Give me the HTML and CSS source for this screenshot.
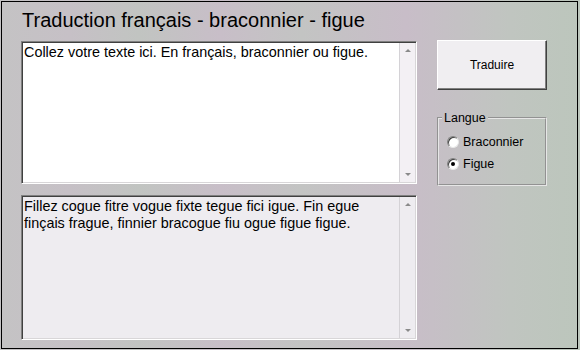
FILE: index.html
```html
<!DOCTYPE html>
<html lang="fr">
<head>
  <meta charset="UTF-8">
  <title>Traduction français - braconnier - figue</title>
  <link rel="stylesheet" href="styles.css">
</head>
<body>
  <div class="window">
    <h1 class="title">Traduction français - braconnier - figue</h1>

    <div class="main">
      <div class="texts">
        <div class="box box-input">
          <div class="box-text">Collez votre texte ici. En français, braconnier ou figue.</div>
          <div class="scroll">
            <span class="arrow arrow-up"></span>
            <span class="arrow arrow-down"></span>
          </div>
        </div>
        <div class="box box-output">
          <div class="box-text">Fillez cogue fitre vogue fixte tegue fici igue. Fin egue finçais frague, finnier bracogue fiu ogue figue figue.</div>
          <div class="scroll">
            <span class="arrow arrow-up"></span>
            <span class="arrow arrow-down"></span>
          </div>
        </div>
      </div>

      <div class="side">
        <button class="button" type="button">Traduire</button>
        <fieldset class="langue">
          <legend>Langue</legend>
          <div class="options">
            <label class="option"><span class="radio"></span>Braconnier</label>
            <label class="option"><span class="radio checked"></span>Figue</label>
          </div>
        </fieldset>
      </div>
    </div>
  </div>
</body>
</html>
```

FILE: styles.css
```css
body {
  margin: 0;
  font-family: "Liberation Sans", Arial, sans-serif;
  color: #000;
  background: linear-gradient(90deg, #c4c3c4 0%, #c6c0c6 12%, #c1c4c1 24%, #c8bec8 38%, #c3c4c3 52%, #c8bdc8 70%, #c0c5c0 88%, #bcc6bc 100%);
  height: 350px;
  overflow: hidden;
}
.window {
  margin: 1px 0 0 1px;
  width: 556px;
  height: 346px;
  border: 1px solid #000;
  padding: 0 0 0 19px;
}
.title {
  margin: 0;
  padding: 7px 0 0 1px;
  font-size: 20px;
  line-height: 22px;
  font-weight: normal;
}
.main {
  display: grid;
  grid-template-columns: 396px 110px;
  column-gap: 20px;
  margin-top: 10px;
}
.texts {
  display: flex;
  flex-direction: column;
  gap: 11px;
}
.box {
  display: flex;
  box-sizing: border-box;
  border: 1px solid;
  border-color: #808080 #fff #fff #808080;
  box-shadow: inset 1px 1px 0 #404040, inset -1px -1px 0 #d8d6d8;
  padding: 1px;
  font-size: 14.4px;
  line-height: 17px;
}
.box-input {
  height: 143px;
  background-color: #fff;
}
.box-output {
  height: 145px;
  background-color: #eeecf0;
}
.box-text {
  flex: 1;
  padding: 1px 1px 0 1px;
}
.scroll {
  width: 15px;
  border-left: 1px solid #d4d2d6;
  display: flex;
  flex-direction: column;
  justify-content: space-between;
  align-items: center;
  padding: 6px 0;
}
.box-input .scroll {
  background-color: #f3f0f4;
}
.arrow {
  width: 0;
  height: 0;
  border-left: 3px solid transparent;
  border-right: 3px solid transparent;
}
.arrow-up {
  border-bottom: 3px solid #8a8a8a;
}
.arrow-down {
  border-top: 3px solid #8a8a8a;
}
.side {
  display: flex;
  flex-direction: column;
}
.button {
  margin-top: -1px;
  height: 50px;
  padding: 0;
  font-family: "Liberation Sans", Arial, sans-serif;
  font-size: 12px;
  color: #000;
  background-color: #f0eef1;
  border: 1px solid;
  border-color: #fff #404040 #404040 #fff;
  box-shadow: inset -1px -1px 0 #808080;
}
.langue {
  margin: 21px 0 0 0;
  padding: 6px 0 9px 3px;
  border: 2px groove #e6e6e6;
  min-width: 0;
}
.langue legend {
  padding: 0 2px;
  font-size: 12.5px;
  line-height: 14px;
}
.options {
  padding-left: 5px;
}
.option {
  display: flex;
  align-items: center;
  gap: 4px;
  height: 22px;
  font-size: 12.5px;
}
.radio {
  position: relative;
  width: 12px;
  height: 12px;
  box-sizing: border-box;
  border-radius: 50%;
  background-color: #fff;
  border: 1px solid;
  border-color: #808080 #e8e8e8 #e8e8e8 #808080;
  box-shadow: inset 1px 1px 0 #404040;
}
.radio.checked::after {
  content: "";
  position: absolute;
  left: 3px;
  top: 3px;
  width: 4px;
  height: 4px;
  border-radius: 50%;
  background-color: #000;
}
```
